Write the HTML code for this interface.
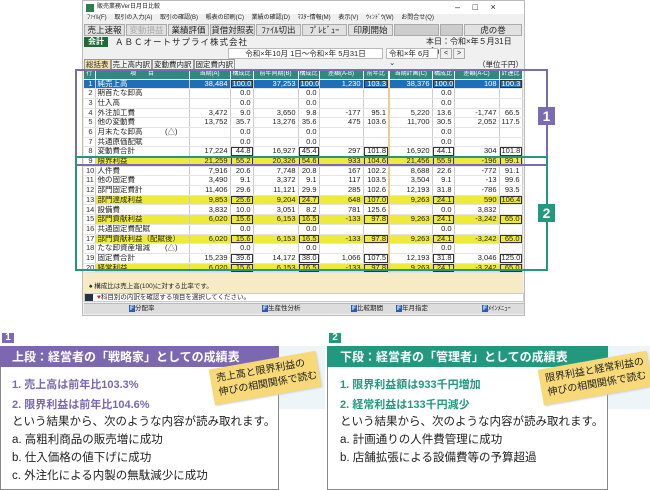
<!DOCTYPE html>
<html><head><meta charset="utf-8"><style>
*{margin:0;padding:0;box-sizing:border-box}
body{width:650px;height:490px;background:#fff;position:relative;overflow:hidden;font-family:"Liberation Sans","Noto Sans CJK JP",sans-serif;color:#222}
.a{position:absolute}
.win{left:82px;top:0;width:443px;height:316px;background:#f0f0f0;border:1px solid #bbb}
.btn{position:absolute;top:23px;height:12px;background:#e1e1e1;border:1px solid #aaa;font-size:8.5px;text-align:center;line-height:10px;color:#222}
table{border-collapse:collapse;table-layout:fixed}
tr{height:9.7px}
td{height:9.7px;font-size:7.5px;line-height:8.5px;padding:0 2px;border-right:1px solid #ccc;border-bottom:1px solid #e4e4e4;white-space:nowrap;overflow:hidden;text-align:right}
td.l{text-align:left}
td.n{text-align:right;color:#333}
tr.h{height:8px}
tr.h td{height:8px;font-size:6px;line-height:7px;background:#2e8a80;color:#fff;text-align:center;border-color:#fff;padding:0}
tr.b td{background:#1f6fb8;color:#fff}
tr.y td{background:#eeea3a}
tr.y td.n,tr.b td.n{background:#fff;color:#333}
td.bx{box-shadow:inset 0 0 0 1px #333}
.sep{border-right:2px solid #e8cf8e}
.lab{position:absolute;width:12px;height:10px;color:#fff;font-size:10px;font-weight:bold;text-align:center;line-height:10px}
.t{position:absolute;left:12px;font-size:11.5px;white-space:nowrap}
</style></head><body>
<div class="a win">
 <div class="a" style="left:0;top:0;width:441px;height:13px;background:#fff;font-size:6px;line-height:13px;padding-left:14px">販売業務Ver日月日比較
  <span class="a" style="left:3px;top:3px;width:8px;height:8px;background:#2e7d4f"></span>
  <span class="a" style="left:372px;top:0;font-size:9px">‒&nbsp;&nbsp;&nbsp;&nbsp;&nbsp;□&nbsp;&nbsp;&nbsp;&nbsp;&nbsp;×</span></div>
 <div class="a" style="left:4px;top:14px;font-size:6px;line-height:7px;word-spacing:6px;white-space:nowrap">ﾌｧｲﾙ(F) 取引の入力(A) 取引の確認(B) 帳表の印刷(C) 業績の確認(D) ﾏｽﾀｰ情報(M) 表示(V) ｳｨﾝﾄﾞｳ(W) お問合せ(Q)</div>
 <div class="btn" style="left:1px;width:41px">売上速報</div>
 <div class="btn" style="left:43px;width:41px;color:#aaa">変動損益</div>
 <div class="btn" style="left:85px;width:41px">業績評価</div>
 <div class="btn" style="left:127px;width:45px">貸借対照表</div>
 <div class="btn" style="left:173px;width:45px">ﾌｧｲﾙ切出</div>
 <div class="btn" style="left:219px;width:45px">ﾌﾟﾚﾋﾞｭｰ</div>
 <div class="btn" style="left:265px;width:45px">印刷開始</div>
 <div class="btn" style="left:311px;width:45px;background:#ccc"></div>
 <div class="btn" style="left:357px;width:23px;background:#ccc"></div>
 <div class="btn" style="left:381px;width:58px">虎の巻</div>
 <div class="a" style="left:1px;top:36px;width:24px;height:10px;background:#1e6b35;color:#fff;font-size:8px;font-weight:bold;text-align:center;line-height:10px">会計</div>
 <div class="a" style="left:32px;top:36px;font-size:8.5px;line-height:10px;letter-spacing:1px">ＡＢＣオートサプライ株式会社</div>
 <div class="a" style="left:343px;top:36px;font-size:8px;line-height:10px">本日：令和×年５月31日(金)</div>
 <div class="a" style="left:145px;top:47px;width:155px;height:11px;background:#fff;border:1px solid #bbb;font-size:7.5px;text-align:center;line-height:9px">令和×年10月 1日〜令和×年 5月31日</div>
 <div class="a" style="left:303px;top:47px;width:52px;height:11px;background:#fff;border:1px solid #bbb;font-size:7.5px;line-height:9px;padding-left:2px">令和×年 6月 ⌄</div>
 <div class="a" style="left:357px;top:47px;width:12px;height:11px;border:1px solid #aaa;font-size:7px;text-align:center;line-height:9px">&lt;</div>
 <div class="a" style="left:370px;top:47px;width:12px;height:11px;border:1px solid #aaa;font-size:7px;text-align:center;line-height:9px">&gt;</div>
 <div class="a" style="left:1px;top:59px;font-size:7.5px;line-height:9px;white-space:nowrap"><span style="background:#f5e4b0;border:1px solid #999;padding:0 1px">総括表</span><span style="border:1px solid #999;padding:0 1px">売上高内訳</span><span style="border:1px solid #999;padding:0 1px">変動費内訳</span><span style="border:1px solid #999;padding:0 1px">固定費内訳</span></div>
 <div class="a" style="left:395px;top:59px;font-size:7.5px;line-height:9px">（単位千円）</div>
 <div class="a" style="left:0;top:70px;width:440px;height:230px;background:#f7ebc6"></div>
 <table class="a" style="left:1px;top:70px;width:438px;background:#fff">
 <colgroup><col style="width:11px"><col style="width:94px"><col style="width:41px"><col style="width:23px"><col style="width:45px"><col style="width:21px"><col style="width:44px"><col style="width:26px"><col style="width:43px"><col style="width:22px"><col style="width:45px"><col style="width:23px"></colgroup>
 <tr class="h"><td>行</td><td>項　　目</td><td>当期(A)</td><td>構成比</td><td>前年同期(B)</td><td>構成比</td><td>差額(A-B)</td><td class="sep">前年比</td><td>当期計画(C)</td><td>構成比</td><td>差額(A-C)</td><td>計達比</td></tr>
 <tr class="b"><td>1</td><td class="l">純売上高</td><td>38,484</td><td class="bx">100.0</td><td>37,253</td><td class="bx">100.0</td><td>1,230</td><td class="bx sep">103.3</td><td>38,376</td><td class="bx">100.0</td><td>108</td><td class="bx">100.3</td></tr>
 <tr><td class="n">2</td><td class="l">期首たな卸高</td><td></td><td>0.0</td><td></td><td>0.0</td><td></td><td class="sep"></td><td></td><td>0.0</td><td></td><td></td></tr>
 <tr><td class="n">3</td><td class="l">仕入高</td><td></td><td>0.0</td><td></td><td>0.0</td><td></td><td class="sep"></td><td></td><td>0.0</td><td></td><td></td></tr>
 <tr><td class="n">4</td><td class="l">外注加工費</td><td>3,472</td><td>9.0</td><td>3,650</td><td>9.8</td><td>-177</td><td class="sep">95.1</td><td>5,220</td><td>13.6</td><td>-1,747</td><td>66.5</td></tr>
 <tr><td class="n">5</td><td class="l">他の変動費</td><td>13,752</td><td>35.7</td><td>13,276</td><td>35.6</td><td>475</td><td class="sep">103.6</td><td>11,700</td><td>30.5</td><td>2,052</td><td>117.5</td></tr>
 <tr><td class="n">6</td><td class="l">月末たな卸高　　　(△)</td><td></td><td>0.0</td><td></td><td>0.0</td><td></td><td class="sep"></td><td></td><td>0.0</td><td></td><td></td></tr>
 <tr><td class="n">7</td><td class="l">共通原価配賦</td><td></td><td>0.0</td><td></td><td>0.0</td><td></td><td class="sep"></td><td></td><td>0.0</td><td></td><td></td></tr>
 <tr><td class="n">8</td><td class="l">変動費合計</td><td>17,224</td><td class="bx">44.8</td><td>16,927</td><td class="bx">45.4</td><td>297</td><td class="bx sep">101.8</td><td>16,920</td><td class="bx">44.1</td><td>304</td><td class="bx">101.8</td></tr>
 <tr class="y"><td class="n">9</td><td class="l">限界利益</td><td>21,259</td><td class="bx">55.2</td><td>20,326</td><td class="bx">54.6</td><td>933</td><td class="bx sep">104.6</td><td>21,456</td><td class="bx">55.9</td><td>-196</td><td class="bx">99.1</td></tr>
 <tr><td class="n">10</td><td class="l">人件費</td><td>7,916</td><td>20.6</td><td>7,748</td><td>20.8</td><td>167</td><td class="sep">102.2</td><td>8,688</td><td>22.6</td><td>-772</td><td>91.1</td></tr>
 <tr><td class="n">11</td><td class="l">他の固定費</td><td>3,490</td><td>9.1</td><td>3,372</td><td>9.1</td><td>117</td><td class="sep">103.5</td><td>3,504</td><td>9.1</td><td>-13</td><td>99.6</td></tr>
 <tr><td class="n">12</td><td class="l">部門固定費計</td><td>11,406</td><td>29.6</td><td>11,121</td><td>29.9</td><td>285</td><td class="sep">102.6</td><td>12,193</td><td>31.8</td><td>-786</td><td>93.5</td></tr>
 <tr class="y"><td class="n">13</td><td class="l">部門達成利益</td><td>9,853</td><td class="bx">25.6</td><td>9,204</td><td class="bx">24.7</td><td>648</td><td class="bx sep">107.0</td><td>9,263</td><td class="bx">24.1</td><td>590</td><td class="bx">106.4</td></tr>
 <tr><td class="n">14</td><td class="l">設備費</td><td>3,832</td><td>10.0</td><td>3,051</td><td>8.2</td><td>781</td><td class="sep">125.6</td><td></td><td>0.0</td><td>3,832</td><td></td></tr>
 <tr class="y"><td class="n">15</td><td class="l">部門貢献利益</td><td>6,020</td><td class="bx">15.6</td><td>6,153</td><td class="bx">16.5</td><td>-133</td><td class="bx sep">97.8</td><td>9,263</td><td class="bx">24.1</td><td>-3,242</td><td class="bx">65.0</td></tr>
 <tr><td class="n">16</td><td class="l">共通固定費配賦</td><td></td><td>0.0</td><td></td><td>0.0</td><td></td><td class="sep"></td><td></td><td>0.0</td><td></td><td></td></tr>
 <tr class="y"><td class="n">17</td><td class="l">部門貢献利益（配賦後）</td><td>6,020</td><td class="bx">15.6</td><td>6,153</td><td class="bx">16.5</td><td>-133</td><td class="bx sep">97.8</td><td>9,263</td><td class="bx">24.1</td><td>-3,242</td><td class="bx">65.0</td></tr>
 <tr><td class="n">18</td><td class="l">たな卸資産増減　　(△)</td><td></td><td>0.0</td><td></td><td>0.0</td><td></td><td class="sep"></td><td></td><td>0.0</td><td></td><td></td></tr>
 <tr><td class="n">19</td><td class="l">固定費合計</td><td>15,239</td><td class="bx">39.6</td><td>14,172</td><td class="bx">38.0</td><td>1,066</td><td class="bx sep">107.5</td><td>12,193</td><td class="bx">31.8</td><td>3,046</td><td class="bx">125.0</td></tr>
 <tr class="y"><td class="n">20</td><td class="l">経常利益</td><td>6,020</td><td class="bx">15.6</td><td>6,153</td><td class="bx">16.5</td><td>-133</td><td class="bx sep">97.8</td><td>9,263</td><td class="bx">24.1</td><td>-3,242</td><td class="bx">65.0</td></tr>
 </table>
 <div class="a" style="left:6px;top:282px;font-size:6.5px;line-height:8px">♠ 構成比は売上高(100)に対する比率です。</div>
 <div class="a" style="left:1px;top:292px;width:440px;height:9px;background:#fff;border:1px solid #ccc;font-size:6.5px;line-height:7px;padding-left:12px"><span style="color:#d22">♥</span>科目別の内訳を確認する項目を選択してください。
  <span class="a" style="left:0;top:0;width:8px;height:7px;background:#234"></span></div>
 <div class="a" style="left:1px;top:302px;width:440px;height:11px;background:#ddd;border-top:1px solid #bbb;font-size:6.5px;line-height:10px;white-space:nowrap">
  <span class="a" style="left:45px"><b style="background:#2a5db0;color:#fff;padding:0 1px">F</b>分配率</span>
  <span class="a" style="left:178px"><b style="background:#2a5db0;color:#fff;padding:0 1px">F</b>生産性分析</span>
  <span class="a" style="left:267px"><b style="background:#2a5db0;color:#fff;padding:0 1px">F</b>比較期間</span>
  <span class="a" style="left:312px"><b style="background:#2a5db0;color:#fff;padding:0 1px">F</b>年月指定</span>
  <span class="a" style="left:398px"><b style="background:#2a5db0;color:#fff;padding:0 1px">F</b>ﾒｲﾝﾒﾆｭｰ</span></div>
</div>
<div class="a" style="left:75px;top:69px;width:473px;height:97px;border:2px solid #7b6bb0"></div>
<div class="a" style="left:75px;top:156px;width:473px;height:115px;border:2px solid #22997f"></div>
<div class="a" style="left:538px;top:107px;width:17px;height:18px;background:#7b6bb0;color:#fff;font-size:14px;font-weight:bold;text-align:center;line-height:18px">1</div>
<div class="a" style="left:538px;top:204px;width:17px;height:18px;background:#22997f;color:#fff;font-size:14px;font-weight:bold;text-align:center;line-height:18px">2</div>

<div class="lab" style="left:2px;top:333px;background:#7b6bb0">1</div>
<div class="a" style="left:278px;top:346px;width:47px;height:63px;background:#eef5f8"></div>
<div class="a" style="left:0;top:346px;width:279px;height:144px;border:1px solid #888;border-top:none"></div>
<div class="a" style="left:0;top:346px;width:279px;height:21px;background:#7b68b0"></div>
<div class="t" style="top:348px;color:#fff;font-weight:bold;font-size:12px">上段：経営者の「戦略家」としての成績表</div>
<div class="t" style="top:376px;color:#7b68b0;font-weight:bold;font-size:11px">1. 売上高は前年比103.3%</div>
<div class="t" style="top:396px;color:#7b68b0;font-weight:bold;font-size:11px">2. 限界利益は前年比104.6%</div>
<div class="t" style="top:413px">という結果から、次のような内容が読み取れます。</div>
<div class="t" style="top:431px">a. 高粗利商品の販売増に成功</div>
<div class="t" style="top:449px">b. 仕入価格の値下げに成功</div>
<div class="t" style="top:467px">c. 外注化による内製の無駄減少に成功</div>
<div class="a" style="left:211px;top:360px;width:108px;height:36px;background:#f7d978;transform:rotate(-10deg);font-size:10px;line-height:14px;padding:4px 0 0 6px;box-shadow:1px 1px 2px #ccc">売上高と限界利益の<br>伸びの相関関係で読む</div>

<div class="lab" style="left:329px;top:333px;background:#22997f">2</div>
<div class="a" style="left:607px;top:346px;width:43px;height:63px;background:#eef5f8"></div>
<div class="a" style="left:327px;top:346px;width:281px;height:144px;border:1px solid #888;border-top:none"></div>
<div class="a" style="left:327px;top:346px;width:281px;height:21px;background:#22997f"></div>
<div class="t" style="left:340px;top:348px;color:#fff;font-weight:bold;font-size:12px">下段：経営者の「管理者」としての成績表</div>
<div class="t" style="left:340px;top:376px;color:#22997f;font-weight:bold;font-size:11px">1. 限界利益額は933千円増加</div>
<div class="t" style="left:340px;top:396px;color:#22997f;font-weight:bold;font-size:11px">2. 経常利益は133千円減少</div>
<div class="t" style="left:340px;top:413px">という結果から、次のような内容が読み取れます。</div>
<div class="t" style="left:340px;top:431px">a. 計画通りの人件費管理に成功</div>
<div class="t" style="left:340px;top:449px">b. 店舗拡張による設備費等の予算超過</div>
<div class="a" style="left:540px;top:360px;width:110px;height:36px;background:#f7d978;transform:rotate(-10deg);font-size:10px;line-height:14px;padding:4px 0 0 6px;box-shadow:1px 1px 2px #ccc">限界利益と経常利益の<br>伸びの相関関係で読む</div>
</body></html>
